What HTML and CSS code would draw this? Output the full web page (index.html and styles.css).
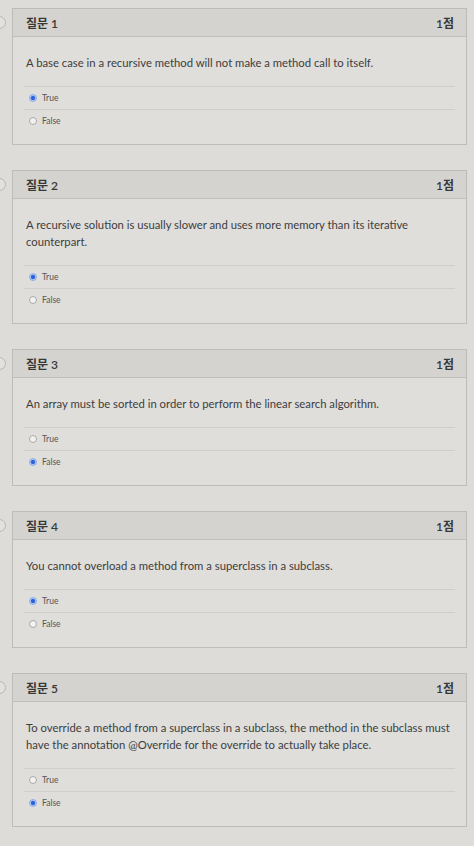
FILE: index.html
```html
<!DOCTYPE html>
<html lang="ko">
<head>
<meta charset="utf-8">
<link rel="stylesheet" href="styles.css">
</head>
<body>
<main class="quiz">
  <section class="card">
    <span class="marker"></span>
    <header class="card-head"><span class="q-title">질문 1</span><span class="q-points">1점</span></header>
    <div class="card-body">
      <p class="q-text">A base case in a recursive method will not make a method call to itself.</p>
      <ul class="options">
        <li class="option"><span class="radio checked"></span>True</li>
        <li class="option"><span class="radio"></span>False</li>
      </ul>
    </div>
  </section>
  <section class="card">
    <span class="marker"></span>
    <header class="card-head"><span class="q-title">질문 2</span><span class="q-points">1점</span></header>
    <div class="card-body">
      <p class="q-text">A recursive solution is usually slower and uses more memory than its iterative counterpart.</p>
      <ul class="options">
        <li class="option"><span class="radio checked"></span>True</li>
        <li class="option"><span class="radio"></span>False</li>
      </ul>
    </div>
  </section>
  <section class="card">
    <span class="marker"></span>
    <header class="card-head"><span class="q-title">질문 3</span><span class="q-points">1점</span></header>
    <div class="card-body">
      <p class="q-text">An array must be sorted in order to perform the linear search algorithm.</p>
      <ul class="options">
        <li class="option"><span class="radio"></span>True</li>
        <li class="option"><span class="radio checked"></span>False</li>
      </ul>
    </div>
  </section>
  <section class="card">
    <span class="marker"></span>
    <header class="card-head"><span class="q-title">질문 4</span><span class="q-points">1점</span></header>
    <div class="card-body">
      <p class="q-text">You cannot overload a method from a superclass in a subclass.</p>
      <ul class="options">
        <li class="option"><span class="radio checked"></span>True</li>
        <li class="option"><span class="radio"></span>False</li>
      </ul>
    </div>
  </section>
  <section class="card">
    <span class="marker"></span>
    <header class="card-head"><span class="q-title">질문 5</span><span class="q-points">1점</span></header>
    <div class="card-body">
      <p class="q-text">To override a method from a superclass in a subclass, the method in the subclass must have the annotation @Override for the override to actually take place.</p>
      <ul class="options">
        <li class="option"><span class="radio"></span>True</li>
        <li class="option"><span class="radio checked"></span>False</li>
      </ul>
    </div>
  </section>
</main>
</body>
</html>
```

FILE: styles.css
```css
* { box-sizing: border-box; }

html, body {
  margin: 0;
  padding: 0;
  background: #dddcd8;
}

body {
  font-family: Lato, "Noto Sans CJK KR", sans-serif;
  color: #3c3c3c;
}

.quiz {
  display: flex;
  flex-direction: column;
  gap: 25px;
  padding: 8px 7px 0 12px;
}

.card {
  position: relative;
  border: 1px solid #bdbcb8;
  background: #dfdedb;
}

.marker {
  position: absolute;
  left: -20px;
  top: 7px;
  width: 13px;
  height: 13px;
  border: 1px solid #b9b8b4;
  border-radius: 50%;
  background: #e2e1de;
}

.card-head {
  display: flex;
  justify-content: space-between;
  align-items: center;
  height: 28px;
  padding: 0 12px 0 13px;
  background: #d4d3cf;
  border-bottom: 1px solid #c0bfbb;
  font-family: Lato, "Noto Sans CJK KR", sans-serif;
  font-weight: 600;
  font-size: 12px;
  color: #383838;
}

.card-body {
  padding: 17px 11px 12px 11px;
}

.q-text {
  margin: 0 0 15px 0;
  padding: 0 0 0 2px;
  font-size: 11.3px;
  line-height: 17px;
  color: #3d3d3d;
}

.options {
  list-style: none;
  margin: 0;
  padding: 0;
}

.option {
  display: flex;
  align-items: center;
  gap: 5px;
  height: 23px;
  padding-left: 5px;
  border-top: 1px solid #cfcecb;
  font-size: 8.5px;
  color: #555;
}

.radio {
  width: 8px;
  height: 8px;
  border-radius: 50%;
  border: 1px solid #a9a8a5;
  background: #f2f2f0;
}

.radio.checked {
  border-color: #8fb0ea;
  background: radial-gradient(circle, #2f63d6 0 1.8px, #a9c3f0 2.4px);
}
```
